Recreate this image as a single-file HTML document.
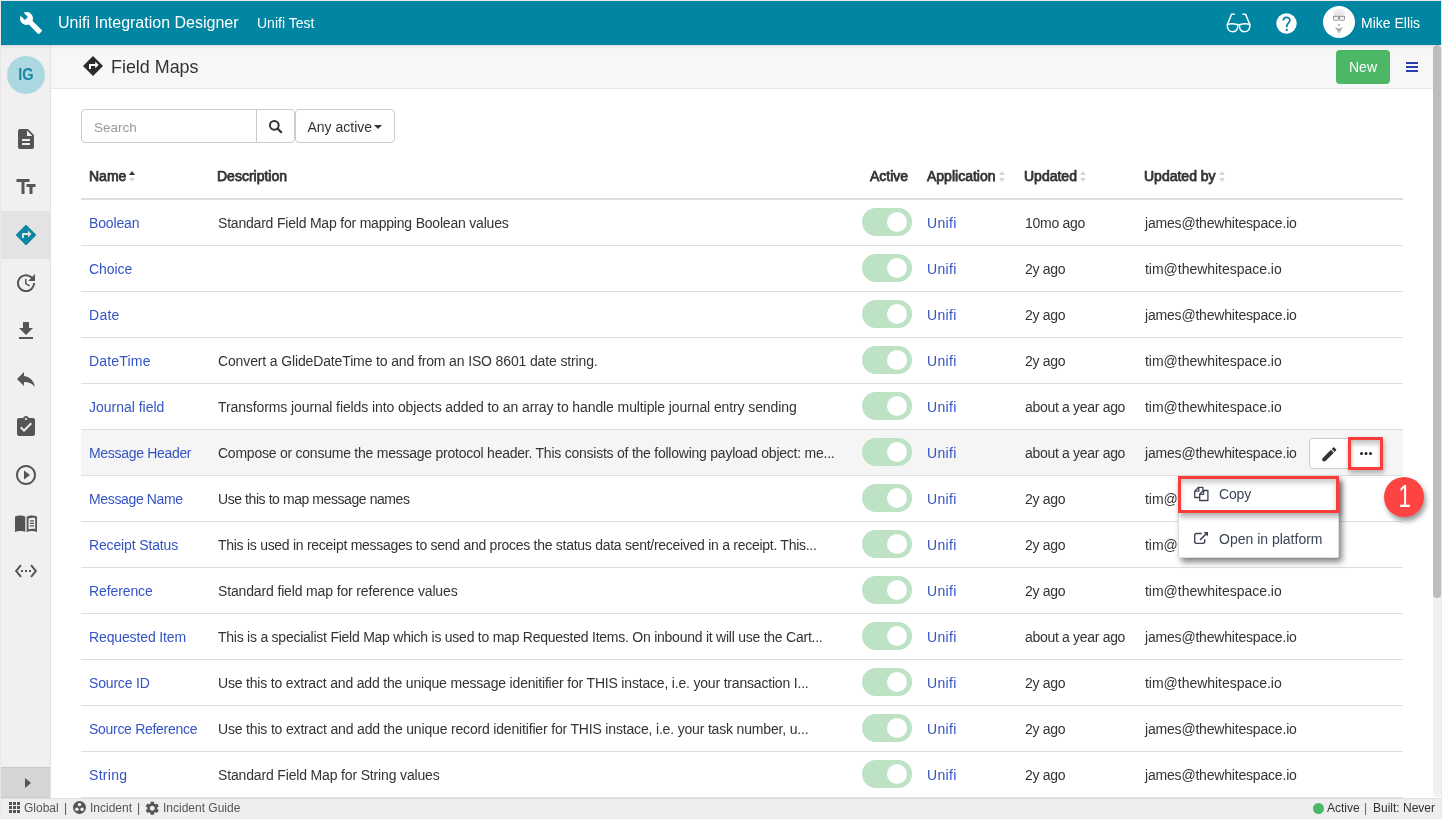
<!DOCTYPE html>
<html><head><meta charset="utf-8">
<style>
*{box-sizing:border-box;margin:0;padding:0}
html,body{width:1442px;height:819px;overflow:hidden;background:#fff;font-family:"Liberation Sans",sans-serif;color:#333}
.abs{position:absolute}
#frame{position:absolute;left:0;top:0;width:1442px;height:819px;border:1px solid #e8e8e8;z-index:50;pointer-events:none}
#topbar{left:0;top:0;width:1442px;height:45px;background:#0085a2;color:#fff;z-index:5;border-bottom:1px solid #0080a0}
#topbar .t1{left:58px;top:14px;font-size:16px;white-space:nowrap;line-height:18px}
#topbar .t2{left:257px;top:15px;font-size:14px;white-space:nowrap;line-height:16px}
#topbar .user{left:1361px;top:15px;font-size:14px;white-space:nowrap;line-height:16px}
#sidebar{left:0;top:45px;width:51px;height:753px;background:#f0f0f0;border-right:1px solid #e2e2e2}
.sitem{position:absolute;left:0;width:50px;height:48px}
.sitem svg{position:absolute}
#pagehead{left:51px;top:45px;width:1382px;height:44px;background:#f7f7f7;border-bottom:1px solid #e6e6e6}
#shadow{left:0;top:45px;width:1433px;height:4px;background:linear-gradient(rgba(0,0,0,.08),rgba(0,0,0,0));z-index:4}
#footer{left:0;top:798px;width:1442px;height:21px;background:#eeeeee;border-top:1px solid #e0e0e0;font-size:12px;color:#555;z-index:6}
#footer span{position:absolute;top:2px;white-space:nowrap;line-height:14px}
.row{position:absolute;left:81px;width:1322px;height:46px;border-bottom:1px solid #dedede;font-size:14px}
.row.hov{background:#f5f5f5}
.row span{position:absolute;top:15px;white-space:nowrap;line-height:16px}
.row .n{left:8px;color:#3554c4}
.row .d{left:137px}
.row .a{left:846px;color:#3554c4}
.row .u{left:944px}
.row .b{left:1064px}
.tog{position:absolute;left:781px;top:8px;width:50px;height:28px;border-radius:14px;background:#bde2c4}
.tog:after{content:"";position:absolute;left:25px;top:4px;width:20px;height:20px;border-radius:10px;background:#fff}
#thead{left:81px;top:160px;width:1322px;height:40px;border-bottom:2px solid #dddddd;font-size:14px;font-weight:normal;-webkit-text-stroke:0.75px #333}
#thead span{position:absolute;top:8px;white-space:nowrap;line-height:16px}
.sort{display:inline-block;vertical-align:top;margin-left:3px;margin-top:3px;width:7px;height:12px;position:relative}
.sort:before{content:"";position:absolute;left:0;top:0;border-left:3.5px solid transparent;border-right:3.5px solid transparent;border-bottom:4px solid #d5d5d5}
.sort:after{content:"";position:absolute;left:0;top:7px;border-left:3.5px solid transparent;border-right:3.5px solid transparent;border-top:4px solid #d5d5d5}
.sort.up:before{border-bottom-color:#333}
#scroll{left:1433px;top:45px;width:8px;height:752px;background:#f1f1f1;border-radius:4px}
#thumb{left:1433px;top:45px;width:8px;height:553px;background:#bdbdbd;border-radius:4px}
</style></head><body>
<div id="wrap" style="position:absolute;left:0;top:0;width:1442px;height:819px;will-change:transform;overflow:hidden">
<div id="frame"></div>
<div id="topbar" class="abs">
  <svg class="abs" style="left:19px;top:11px" width="24" height="24" viewBox="0 0 24 24"><path fill="#fff" d="M22.7 19l-9.1-9.1c.9-2.3.4-5-1.5-6.9-2-2-5-2.4-7.4-1.3L9 6 6 9 1.6 4.7C.4 7.1.9 10.1 2.9 12.1c1.9 1.9 4.6 2.4 6.9 1.5l9.1 9.1c.4.4 1 .4 1.4 0l2.3-2.3c.5-.4.5-1.1.1-1.4z"/></svg>
  <div class="abs t1">Unifi Integration Designer</div>
  <div class="abs t2">Unifi Test</div>
  <svg class="abs" style="left:1220px;top:8px" width="40" height="30" viewBox="0 0 40 30" fill="none" stroke="#fff" stroke-width="1.5" stroke-linejoin="round"><path d="M14.8 6.2 H11.6 L7.4 16.5"/><path d="M22.4 6.2 H25.6 L29.8 16.5"/><path d="M7.3 16.4 Q12.5 14.9 17.8 16.8 Q18 23.7 12.6 23.7 Q7.1 23.7 7.3 16.4 Z"/><path d="M29.9 16.4 Q24.7 14.9 19.4 16.8 Q19.2 23.7 24.6 23.7 Q30.1 23.7 29.9 16.4 Z"/><path d="M17.8 16.8 Q18.6 16.2 19.4 16.8"/></svg>
  <svg class="abs" style="left:1276px;top:12.8px" width="21" height="21" viewBox="0 0 21 21"><circle cx="10.5" cy="10.5" r="10.2" fill="#fff"/><path d="M7.4 7.6 C7.4 3.3 13.8 3.3 13.8 7.4 C13.8 10 10.8 10.3 10.8 13 V14.2" fill="none" stroke="#0085a2" stroke-width="1.7"/><circle cx="10.8" cy="16.9" r="1.15" fill="#0085a2"/></svg>
  <svg class="abs" style="left:1323px;top:6px" width="32" height="32" viewBox="0 0 32 32"><defs><radialGradient id="hd" cx="50%" cy="70%" r="60%"><stop offset="0" stop-color="#dedede"/><stop offset="1" stop-color="#f2f2f2"/></radialGradient><linearGradient id="bd" x1="0" y1="0" x2="0" y2="1"><stop offset="0" stop-color="#888"/><stop offset="1" stop-color="#ddd"/></linearGradient></defs><circle cx="16" cy="16" r="16" fill="#fff"/><ellipse cx="16" cy="7.5" rx="6" ry="5" fill="url(#hd)"/><path d="M10 10 H22 V11.3 H10 Z" fill="#8a8a8a"/><rect x="10.5" y="10.3" width="5" height="4" rx="0.8" fill="#f0f0f0" stroke="#8e8e8e" stroke-width="0.9"/><rect x="16.5" y="10.3" width="5" height="4" rx="0.8" fill="#f0f0f0" stroke="#8e8e8e" stroke-width="0.9"/><path d="M14.5 18 H17.5 L16.4 20.2 H15.6 Z" fill="#bbb"/><path d="M12 21 Q16 24.5 20 21 L17.5 25 L16 28.5 L14.5 25 Z" fill="url(#bd)"/><path d="M15 28 H17 V32 H15 Z" fill="#f2f2f2"/></svg>
  <div class="abs user">Mike Ellis</div>
</div>
<div id="sidebar" class="abs">
  <div class="abs" style="left:7px;top:11px;width:38px;height:38px;border-radius:19px;background:#acd9e1"></div><div class="abs" style="left:7px;top:21.5px;width:38px;height:16px;color:#1a86a1;font-size:16.8px;font-weight:bold;text-align:center;line-height:16px"><span style="display:inline-block;transform:scaleX(.87)">IG</span></div>
  <div class="abs" style="left:0;top:166px;width:50px;height:48px;background:#e3e3e3"></div>
  <svg class="abs" style="left:14px;top:82px" width="24" height="24" viewBox="0 0 24 24" fill="#555555"><path d="M14 2H6c-1.1 0-1.99.9-1.99 2L4 20c0 1.1.89 2 1.99 2H18c1.1 0 2-.9 2-2V8l-6-6zm2 16H8v-2h8v2zm0-4H8v-2h8v2zm-3-5V3.5L18.5 9H13z"/></svg>
  <svg class="abs" style="left:14px;top:130px" width="24" height="24" viewBox="0 0 24 24" fill="#555555"><path d="M2.5 4v3h5v12h3V7h5V4h-13zm19 5h-9v3h3v7h3v-7h3V9z"/></svg>
  <svg class="abs" style="left:14px;top:178px" width="24" height="24" viewBox="0 0 24 24" fill="#0a87a3"><path d="M21.71 11.29l-9-9c-.39-.39-1.02-.39-1.41 0l-9 9c-.39.39-.39 1.02 0 1.41l9 9c.39.39 1.02.39 1.41 0l9-9c.39-.38.39-1.01 0-1.41zM14 14.5V12h-4v3H8v-4c0-.55.45-1 1-1h5V7.5l3.5 3.5-3.5 3.5z"/></svg>
  <svg class="abs" style="left:14px;top:226px" width="24" height="24" viewBox="0 0 24 24" fill="#555555"><path d="M21 10.12h-6.78l2.74-2.82c-2.73-2.7-7.15-2.8-9.88-.1-2.73 2.71-2.730 7.08 0 9.790s7.15 2.71 9.88 0C18.32 15.65 19 14.08 19 12.1h2c0 1.98-.88 4.550-2.64 6.29-3.51 3.48-9.21 3.48-12.72 0-3.5-3.47-3.53-9.11-.02-12.58s9.14-3.47 12.65 0L21 3v7.12zM12.5 8v4.25l3.5 2.08-.72 1.21L11 13V8h1.5z"/></svg>
  <svg class="abs" style="left:14px;top:274px" width="24" height="24" viewBox="0 0 24 24" fill="#555555"><path d="M19 9h-4V3H9v6H5l7 7 7-7zM5 18v2h14v-2H5z"/></svg>
  <svg class="abs" style="left:14px;top:322px" width="24" height="24" viewBox="0 0 24 24" fill="#555555"><path d="M10 9V5l-7 7 7 7v-4.1c5 0 8.5 1.6 11 5.1-1-5-4-10-11-11z"/></svg>
  <svg class="abs" style="left:14px;top:370px" width="24" height="24" viewBox="0 0 24 24" fill="#555555"><path d="M19 3h-4.18C14.4 1.84 13.3 1 12 1c-1.3 0-2.4.84-2.82 2H5c-1.1 0-2 .9-2 2v14c0 1.1.9 2 2 2h14c1.1 0 2-.9 2-2V5c0-1.1-.9-2-2-2zm-7 0c.55 0 1 .45 1 1s-.45 1-1 1-1-.45-1-1 .45-1 1-1zm-2 14l-4-4 1.41-1.41L10 14.17l6.59-6.59L18 9l-8 8z"/></svg>
  <svg class="abs" style="left:14px;top:418px" width="24" height="24" viewBox="0 0 24 24" fill="#555555"><path d="M10 16.5l6-4.5-6-4.5v9zM12 2C6.48 2 2 6.48 2 12s4.48 10 10 10 10-4.48 10-10S17.52 2 12 2zm0 18c-4.410 0-8-3.59-8-8s3.59-8 8-8 8 3.59 8 8-3.59 8-8 8z"/></svg>
  <svg class="abs" style="left:14px;top:466px" width="24" height="24" viewBox="0 0 24 24" fill="#555555"><path d="M1 5.5 C4 4 8.5 4 11.3 5.6 V21 C8.5 19.6 4 19.6 1 21 Z"/><path d="M12.7 5.6 C15.5 4 20 4 23 5.5 V21 C20 19.6 15.5 19.6 12.7 21 Z M14.5 7.5 V18.3 C16.5 17.6 19.2 17.6 21.2 18.1 V7.1 C19.2 6.6 16.5 6.8 14.5 7.5 Z"/><path d="M15.8 9.3 H20 V10.5 H15.8 Z M15.8 11.8 H20 V13 H15.8 Z M15.8 14.3 H20 V15.5 H15.8 Z"/></svg>
  <svg class="abs" style="left:14px;top:514px" width="24" height="24" viewBox="0 0 24 24" fill="#555555"><path d="M7.77 6.76L6.23 5.48.82 12l5.41 6.52 1.54-1.28L3.42 12l4.35-5.24zM7 13h2v-2H7v2zm10-2h-2v2h2v-2zm-6 2h2v-2h-2v2zm6.77-7.52l-1.54 1.28L20.58 12l-4.35 5.24 1.54 1.28L23.18 12l-5.41-6.52z"/></svg>
</div>
<div id="pagehead" class="abs">
  <svg class="abs" style="left:32px;top:11px" width="20" height="20" viewBox="0 0 20 20"><path d="M10 0 L20 10 L10 20 L0 10 Z" fill="#2b2b2b"/><path d="M6 13 V8 H12.2 V5.6 L15.7 8.9 L12.2 12.2 V10 H8 V13 Z" fill="#fff"/></svg>
  <div class="abs" style="left:60px;top:12px;font-size:17.9px;line-height:20px;color:#333;white-space:nowrap">Field Maps</div>
  <div class="abs" style="left:1285px;top:5px;width:54px;height:34px;border-radius:4px;background:#4cb865;color:#fff;font-size:14px;text-align:center;line-height:34px">New</div>
  <div class="abs" style="left:1355px;top:17px;width:12px;height:2px;background:#2b3bb0"></div>
  <div class="abs" style="left:1355px;top:21px;width:12px;height:2px;background:#2b3bb0"></div>
  <div class="abs" style="left:1355px;top:25px;width:12px;height:2px;background:#2b3bb0"></div>
</div>
<div id="shadow" class="abs"></div>
<!-- search -->
<div class="abs" style="left:81px;top:109px;width:176px;height:34px;border:1px solid #ccc;border-radius:4px 0 0 4px;background:#fff"></div>
<div class="abs" style="left:94px;top:119.5px;font-size:13.5px;line-height:16px;color:#999">Search</div>
<div class="abs" style="left:256px;top:109px;width:39px;height:34px;border:1px solid #ccc;border-radius:0 4px 4px 0;background:#fff"></div>
<svg class="abs" style="left:268px;top:119px" width="15" height="15" viewBox="0 0 15 15"><circle cx="6.3" cy="6.3" r="4.4" fill="none" stroke="#333" stroke-width="2"/><path d="M9.6 9.6 L13.2 13.2" stroke="#333" stroke-width="2.2" stroke-linecap="round"/></svg>
<div class="abs" style="left:295px;top:109px;width:100px;height:34px;border:1px solid #ccc;border-radius:4px;background:#fff"></div>
<div class="abs" style="left:307.5px;top:119px;font-size:14px;line-height:16px;color:#333;white-space:nowrap">Any active</div>
<div class="abs" style="left:374px;top:125px;border-left:4px solid transparent;border-right:4px solid transparent;border-top:4px solid #333"></div>
<!-- table header -->
<div id="thead" class="abs">
  <span style="left:8px">Name<i class="sort up"></i></span>
  <span style="left:136px">Description</span>
  <span style="left:789px">Active</span>
  <span style="left:846px">Application<i class="sort"></i></span>
  <span style="left:943px">Updated<i class="sort"></i></span>
  <span style="left:1063px">Updated by<i class="sort"></i></span>
</div>
<div class="row" style="top:200px"><span class="n" style="letter-spacing:-0.150px">Boolean</span><span class="d" style="letter-spacing:-0.202px">Standard Field Map for mapping Boolean values</span><i class="tog"></i><span class="a" style="letter-spacing:0.350px">Unifi</span><span class="u" style="letter-spacing:-0.271px">10mo ago</span><span class="b" style="letter-spacing:-0.190px">james@thewhitespace.io</span></div>
<div class="row" style="top:246px"><span class="n" style="letter-spacing:-0.080px">Choice</span><span class="d" style="letter-spacing:0.000px"></span><i class="tog"></i><span class="a" style="letter-spacing:0.350px">Unifi</span><span class="u" style="letter-spacing:-0.320px">2y ago</span><span class="b" style="letter-spacing:-0.026px">tim@thewhitespace.io</span></div>
<div class="row" style="top:292px"><span class="n" style="letter-spacing:0.267px">Date</span><span class="d" style="letter-spacing:0.000px"></span><i class="tog"></i><span class="a" style="letter-spacing:0.350px">Unifi</span><span class="u" style="letter-spacing:-0.320px">2y ago</span><span class="b" style="letter-spacing:-0.190px">james@thewhitespace.io</span></div>
<div class="row" style="top:338px"><span class="n" style="letter-spacing:0.186px">DateTime</span><span class="d" style="letter-spacing:-0.137px">Convert a GlideDateTime to and from an ISO 8601 date string.</span><i class="tog"></i><span class="a" style="letter-spacing:0.350px">Unifi</span><span class="u" style="letter-spacing:-0.320px">2y ago</span><span class="b" style="letter-spacing:-0.026px">tim@thewhitespace.io</span></div>
<div class="row" style="top:384px"><span class="n" style="letter-spacing:-0.008px">Journal field</span><span class="d" style="letter-spacing:-0.103px">Transforms journal fields into objects added to an array to handle multiple journal entry sending</span><i class="tog"></i><span class="a" style="letter-spacing:0.350px">Unifi</span><span class="u" style="letter-spacing:-0.313px">about a year ago</span><span class="b" style="letter-spacing:-0.026px">tim@thewhitespace.io</span></div>
<div class="row hov" style="top:430px"><span class="n" style="letter-spacing:-0.315px">Message Header</span><span class="d" style="letter-spacing:-0.237px">Compose or consume the message protocol header. This consists of the following payload object: me...</span><i class="tog"></i><span class="a" style="letter-spacing:0.350px">Unifi</span><span class="u" style="letter-spacing:-0.313px">about a year ago</span><span class="b" style="letter-spacing:-0.190px">james@thewhitespace.io</span></div>
<div class="row" style="top:476px"><span class="n" style="letter-spacing:-0.355px">Message Name</span><span class="d" style="letter-spacing:-0.425px">Use this to map message names</span><i class="tog"></i><span class="a" style="letter-spacing:0.350px">Unifi</span><span class="u" style="letter-spacing:-0.320px">2y ago</span><span class="b" style="letter-spacing:-0.026px">tim@thewhitespace.io</span></div>
<div class="row" style="top:522px"><span class="n" style="letter-spacing:-0.146px">Receipt Status</span><span class="d" style="letter-spacing:-0.276px">This is used in receipt messages to send and proces the status data sent/received in a receipt. This...</span><i class="tog"></i><span class="a" style="letter-spacing:0.350px">Unifi</span><span class="u" style="letter-spacing:-0.320px">2y ago</span><span class="b" style="letter-spacing:-0.026px">tim@thewhitespace.io</span></div>
<div class="row" style="top:568px"><span class="n" style="letter-spacing:-0.100px">Reference</span><span class="d" style="letter-spacing:-0.145px">Standard field map for reference values</span><i class="tog"></i><span class="a" style="letter-spacing:0.350px">Unifi</span><span class="u" style="letter-spacing:-0.320px">2y ago</span><span class="b" style="letter-spacing:-0.026px">tim@thewhitespace.io</span></div>
<div class="row" style="top:614px"><span class="n" style="letter-spacing:-0.131px">Requested Item</span><span class="d" style="letter-spacing:-0.243px">This is a specialist Field Map which is used to map Requested Items. On inbound it will use the Cart...</span><i class="tog"></i><span class="a" style="letter-spacing:0.350px">Unifi</span><span class="u" style="letter-spacing:-0.313px">about a year ago</span><span class="b" style="letter-spacing:-0.190px">james@thewhitespace.io</span></div>
<div class="row" style="top:660px"><span class="n" style="letter-spacing:-0.175px">Source ID</span><span class="d" style="letter-spacing:-0.187px">Use this to extract and add the unique message idenitifier for THIS instace, i.e. your transaction I...</span><i class="tog"></i><span class="a" style="letter-spacing:0.350px">Unifi</span><span class="u" style="letter-spacing:-0.320px">2y ago</span><span class="b" style="letter-spacing:-0.026px">tim@thewhitespace.io</span></div>
<div class="row" style="top:706px"><span class="n" style="letter-spacing:-0.293px">Source Reference</span><span class="d" style="letter-spacing:-0.173px">Use this to extract and add the unique record idenitifier for THIS instace, i.e. your task number, u...</span><i class="tog"></i><span class="a" style="letter-spacing:0.350px">Unifi</span><span class="u" style="letter-spacing:-0.320px">2y ago</span><span class="b" style="letter-spacing:-0.190px">james@thewhitespace.io</span></div>
<div class="row" style="top:752px"><span class="n" style="letter-spacing:0.300px">String</span><span class="d" style="letter-spacing:-0.157px">Standard Field Map for String values</span><i class="tog"></i><span class="a" style="letter-spacing:0.350px">Unifi</span><span class="u" style="letter-spacing:-0.320px">2y ago</span><span class="b" style="letter-spacing:-0.190px">james@thewhitespace.io</span></div>

<!-- action buttons -->
<div class="abs" style="left:1309px;top:438px;width:40px;height:31px;border:1px solid #ccc;border-radius:4px 0 0 4px;background:#fff"></div>
<svg class="abs" style="left:1319.7px;top:444.7px" width="18.7" height="18.7" viewBox="0 0 24 24" fill="#333"><path d="M3 17.25V21h3.75L17.81 9.94l-3.75-3.75L3 17.25zM20.71 7.04c.39-.39.39-1.020 0-1.41l-2.34-2.34c-.39-.39-1.02-.39-1.41 0l-1.83 1.83 3.75 3.75 1.83-1.83z"/></svg>
<div class="abs" style="left:1348px;top:437px;width:35px;height:33px;background:#fff;box-shadow:inset 0 4px 5px rgba(0,0,0,.22), inset 1px 0 2px rgba(0,0,0,.08), 1px 3px 5px rgba(0,0,0,.3);border:3px solid #fc3b3b;z-index:8"></div>
<div class="abs" style="left:1360px;top:452px;width:3px;height:3px;border-radius:1.5px;background:#222;box-shadow:4.5px 0 0 #222,9px 0 0 #222;z-index:9"></div>
<!-- dropdown -->
<div class="abs" style="left:1178px;top:476px;width:161px;height:82px;background:#fff;border:1px solid #ddd;border-radius:0 0 2px 2px;box-shadow:3px 4px 6px rgba(0,0,0,.5);z-index:10">
</div>
<div class="abs" style="left:1178px;top:476px;width:161px;height:37px;border:3px solid #fc3b3b;box-shadow:inset 0 4px 5px rgba(0,0,0,.2), 2px 4px 5px rgba(0,0,0,.3);z-index:11"></div>
<svg class="abs" style="left:1190px;top:482px;z-index:12" width="25" height="24" viewBox="0 0 25 24" fill="none" stroke="#3c4456" stroke-width="1.3" stroke-linejoin="round"><path d="M12.9 8.5 V5.3 H8.6 L4.7 9.2 V15.5 H9.7"/><path d="M8.8 5.4 V9.2 H4.8"/><path d="M13.3 8.5 H17.9 V18.5 H9.7 V12.3 Z"/><path d="M13.5 8.6 V12.3 H9.8"/></svg>
<div class="abs" style="left:1219px;top:486px;font-size:14px;letter-spacing:-0.15px;line-height:16px;color:#3c4456;z-index:12">Copy</div>
<svg class="abs" style="left:1190px;top:526px;z-index:12" width="25" height="24" viewBox="0 0 25 24"><path d="M11.8 7.5 H6.5 Q4.7 7.5 4.7 9.3 V15.6 Q4.7 17.4 6.5 17.4 H12.9 Q14.7 17.4 14.7 15.6 V13.3" fill="none" stroke="#3c4456" stroke-width="1.4"/><path d="M10.5 13.5 L16 8" stroke="#3c4456" stroke-width="1.6" stroke-linecap="round"/><path d="M13.6 6.1 H18 V10.6 Z" fill="#3c4456"/></svg>
<div class="abs" style="left:1219px;top:531px;font-size:14px;line-height:16px;color:#3c4456;z-index:12;white-space:nowrap">Open in platform</div>
<!-- badge -->
<div class="abs" style="left:1384px;top:477px;width:40px;height:40px;border-radius:20px;background:#fe4343;box-shadow:2px 4px 5px rgba(0,0,0,.4);color:#fff;font-size:31px;text-align:center;line-height:40px;z-index:12"><span style="display:inline-block;transform:scaleX(.72);margin-left:1px">1</span></div>
<!-- scrollbar -->
<div id="scroll" class="abs"></div>
<div id="thumb" class="abs"></div>
<!-- collapse -->
<div class="abs" style="left:0;top:767px;width:50px;height:31px;background:#d5d5d5;border-top:1px solid #c9c9c9;border-bottom:1px solid #c9c9c9"></div>
<div class="abs" style="left:24.5px;top:777.5px;border-top:5px solid transparent;border-bottom:5px solid transparent;border-left:6px solid #555"></div>
<div id="footer" class="abs">
  <svg class="abs" style="left:9px;top:3px" width="11" height="11" viewBox="0 0 11 11" fill="#555"><rect x="0" y="0" width="3" height="3"/><rect x="4" y="0" width="3" height="3"/><rect x="8" y="0" width="3" height="3"/><rect x="0" y="4" width="3" height="3"/><rect x="4" y="4" width="3" height="3"/><rect x="8" y="4" width="3" height="3"/><rect x="0" y="8" width="3" height="3"/><rect x="4" y="8" width="3" height="3"/><rect x="8" y="8" width="3" height="3"/></svg>
  <span style="left:24px">Global</span>
  <span style="left:64px">|</span>
  <svg class="abs" style="left:73px;top:2px" width="13" height="13" viewBox="0 0 13 13"><circle cx="6.5" cy="6.5" r="6.5" fill="#555"/><circle cx="6.5" cy="3.6" r="1.7" fill="#fff"/><circle cx="3.9" cy="8.2" r="1.7" fill="#fff"/><circle cx="9.1" cy="8.2" r="1.7" fill="#fff"/></svg>
  <span style="left:90px">Incident</span>
  <span style="left:137px">|</span>
  <svg class="abs" style="left:144px;top:0.5px" width="16.5" height="16.5" viewBox="0 0 24 24" fill="#555"><path d="M19.14 12.94c.04-.3.06-.61.06-.94 0-.32-.02-.64-.07-.94l2.03-1.58c.18-.14.23-.41.12-.61l-1.92-3.32c-.12-.22-.37-.29-.59-.22l-2.39.96c-.5-.38-1.03-.7-1.62-.94l-.36-2.54c-.04-.24-.24-.41-.48-.41h-3.84c-.24 0-.43.17-.47.41l-.36 2.54c-.59.24-1.13.57-1.62.94l-2.39-.96c-.22-.08-.47 0-.59.22L2.74 8.87c-.12.21-.08.47.12.61l2.03 1.58c-.05.3-.09.63-.09.94s.02.64.07.94l-2.03 1.58c-.18.14-.23.41-.12.61l1.92 3.32c.12.22.37.29.59.22l2.39-.96c.5.38 1.03.7 1.62.94l.36 2.54c.05.24.24.41.48.41h3.84c.24 0 .44-.17.47-.41l.36-2.54c.59-.24 1.13-.56 1.62-.94l2.39.96c.22.08.47 0 .59-.22l1.92-3.32c.12-.22.07-.47-.12-.61l-2.01-1.58zM12 15.6c-1.98 0-3.6-1.62-3.6-3.6s1.62-3.6 3.6-3.6 3.6 1.62 3.6 3.6-1.62 3.6-3.6 3.6z"/></svg>
  <span style="left:163px">Incident Guide</span>
  <div class="abs" style="left:1313px;top:4px;width:11px;height:11px;border-radius:6px;background:#4cb865"></div>
  <span style="left:1327px;color:#333">Active</span>
  <span style="left:1364px;color:#666">|</span>
  <span style="left:1373px;color:#333">Built: Never</span>
</div>
</div>
</body></html>
